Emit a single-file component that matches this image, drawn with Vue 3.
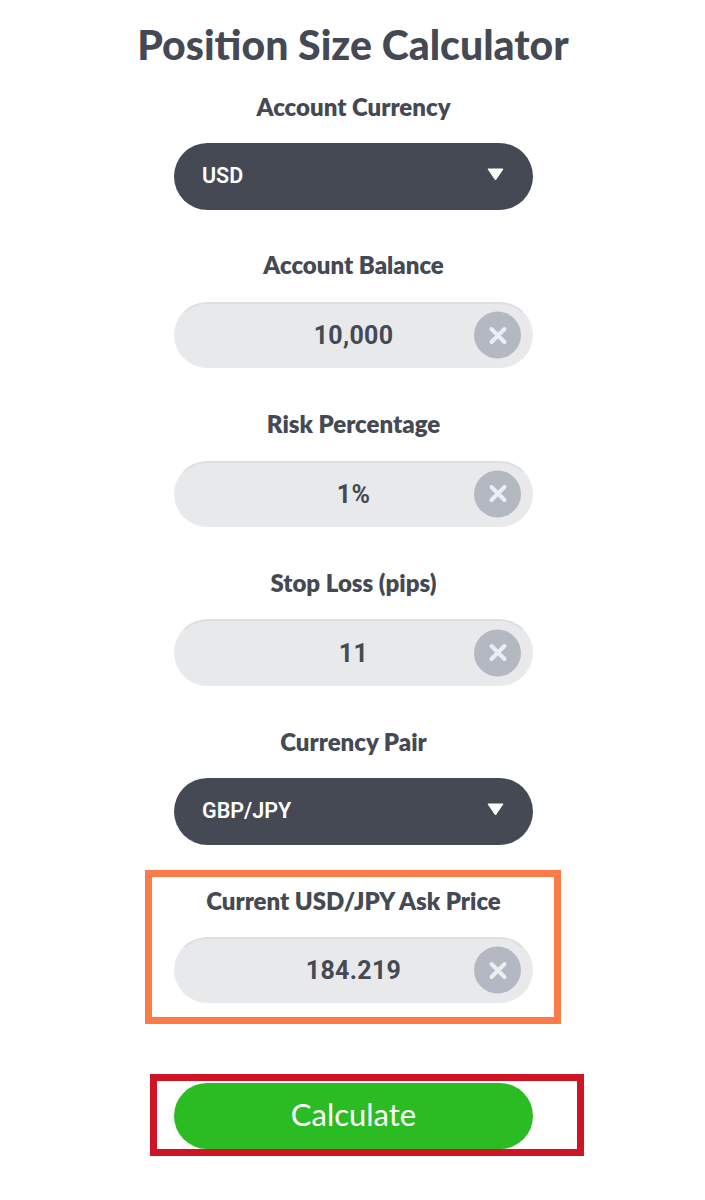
<script setup>
const fields = [
  { label: "Account Currency", type: "select", value: "USD" },
  { label: "Account Balance", type: "input", value: "10,000" },
  { label: "Risk Percentage", type: "input", value: "1%" },
  { label: "Stop Loss (pips)", type: "input", value: "11" },
  { label: "Currency Pair", type: "select", value: "GBP/JPY" },
  { label: "Current USD/JPY Ask Price", type: "input", value: "184.219" }
];
</script>

<template>
  <div class="page">
    <h1 class="title">Position Size Calculator</h1>

    <div class="fields">
      <div v-for="field in fields" :key="field.label" class="field">
        <div class="label">{{ field.label }}</div>

        <!-- Dropdown -->
        <div v-if="field.type === 'select'" class="pill select">
          <span>{{ field.value }}</span>
          <svg class="arrow" width="17" height="13" viewBox="0 0 17 13">
            <path d="M1 1h15l-7.500 11z" fill="#fff" stroke="#fff" stroke-linejoin="round" />
          </svg>
        </div>

        <!-- Text input -->
        <div v-else class="pill input">
          <span>{{ field.value }}</span>
          <div class="clear">
            <svg width="20" height="20" viewBox="0 0 20 20">
              <path d="M3.500 3.500l13 13M16.500 3.500l-13 13" stroke="#eceef1" stroke-width="4" stroke-linecap="round" />
            </svg>
          </div>
        </div>
      </div>

      <!-- Annotation box -->
      <div class="mark-orange"></div>
    </div>

    <div class="calc-wrap">
      <button class="calc">Calculate</button>
      <div class="mark-red"></div>
    </div>
  </div>
</template>

<style scoped>
.page {
  width: 705px;
  height: 1200px;
  background: #fff;
  display: flex;
  flex-direction: column;
  align-items: center;
  padding-top: 21px;
  padding-left: 2px;
  box-sizing: border-box;
  color: #444953;
  font-family: "Lato", "Noto Sans", sans-serif;
  overflow: hidden;
}

.title {
  margin: 0 0 0 -1px;
  height: 48px;
  line-height: 48px;
  font-size: 41px;
  font-weight: 900;
  white-space: nowrap;
}

.fields {
  position: relative;
  margin-top: 23.6px;
  display: flex;
  flex-direction: column;
  gap: 41.8px;
}

.field {
  width: 359px;
  display: flex;
  flex-direction: column;
  gap: 22.400px;
}

.label {
  height: 28px;
  line-height: 28px;
  text-align: center;
  font-size: 24px;
  font-weight: 800;
  white-space: nowrap;
}

.pill {
  height: 66.600px;
  border-radius: 34px;
  box-sizing: border-box;
  display: flex;
  align-items: center;
  font-family: "Roboto", sans-serif;
  font-weight: 700;
}

.select {
  background: #444953;
  color: #fff;
  font-size: 21.500px;
  font-weight: 600;
  padding: 0 29px 2px 28px;
  justify-content: space-between;
}

.arrow {
  margin-top: -1px;
}

.input {
  position: relative;
  justify-content: center;
  background: #e8e9eb;
  border: 2px solid #e9eaec;
  border-top-color: #dedfe2;
  padding-top: 1px;
  font-size: 25px;
  letter-spacing: 0.3px;
}

.clear {
  position: absolute;
  right: 10px;
  top: 50%;
  transform: translateY(-50%);
  width: 47px;
  height: 47px;
  border-radius: 50%;
  background: #b3b8c3;
  display: flex;
  align-items: center;
  justify-content: center;
}

.mark-orange {
  position: absolute;
  left: -29px;
  top: 777.400px;
  width: 416px;
  height: 154px;
  box-sizing: border-box;
  border: 7px solid #fd7b47;
  pointer-events: none;
}

.calc-wrap {
  position: relative;
  margin-top: 79.800px;
}

.calc {
  display: block;
  width: 359px;
  height: 66px;
  padding: 0 0 4px;
  border: none;
  border-radius: 34px;
  background: #2bbb22;
  color: #fff;
  font-family: "Lato", "Noto Sans", sans-serif;
  font-size: 31px;
  font-weight: 400;
}

.mark-red {
  position: absolute;
  left: -24px;
  top: -9px;
  width: 434px;
  height: 82px;
  box-sizing: border-box;
  border: 7px solid #cf1426;
  pointer-events: none;
}
</style>
